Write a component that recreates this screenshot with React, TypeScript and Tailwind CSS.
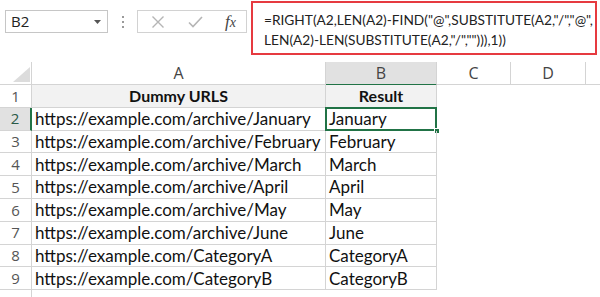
import React from "react";

const rows: [string, string][] = [
  ["https://example.com/archive/January", "January"],
  ["https://example.com/archive/February", "February"],
  ["https://example.com/archive/March", "March"],
  ["https://example.com/archive/April", "April"],
  ["https://example.com/archive/May", "May"],
  ["https://example.com/archive/June", "June"],
  ["https://example.com/CategoryA", "CategoryA"],
  ["https://example.com/CategoryB", "CategoryB"],
];

const cellFont = { fontFamily: "Lato, 'Liberation Sans', sans-serif" };
const uiFont = { fontFamily: "'Open Sans', 'Noto Sans', sans-serif" };

export default function App() {
  return (
    <div className="w-[600px] h-[297px] bg-white overflow-hidden relative" style={uiFont}>
      {/* Top bar */}
      <div className="h-[62px] flex items-start">
        <div className="ml-[5px] mt-[10px] w-[103px] h-[23px] border border-[#c6c6c6] flex items-center justify-between pl-[5px] pr-[6px]">
          <span className="text-[15px] text-[#222] leading-none">B2</span>
          <svg width="7" height="4" viewBox="0 0 7 4"><path d="M0 0h7L3.5 4z" fill="#555" /></svg>
        </div>
        <div className="ml-[14px] mt-[16px] flex flex-col gap-[3px]">
          <div className="w-[2px] h-[2px] bg-[#9a9a9a]" />
          <div className="w-[2px] h-[2px] bg-[#9a9a9a]" />
          <div className="w-[2px] h-[2px] bg-[#9a9a9a]" />
        </div>
        <div className="ml-[13px] mt-[10px] w-[110px] h-[23px] border border-[#d2d2d2] flex items-center">
          <svg className="ml-[13px]" width="14" height="14" viewBox="0 0 14 14">
            <path d="M1.5 1.5l11 11M12.5 1.5l-11 11" stroke="#b5b5b5" strokeWidth="1.4" />
          </svg>
          <svg className="ml-[23px]" width="15" height="12" viewBox="0 0 15 12">
            <path d="M1 6.5l4 4L14 1" stroke="#b5b5b5" strokeWidth="1.6" fill="none" />
          </svg>
          <span className="ml-[22px] text-[17px] italic text-[#444] leading-none" style={{ fontFamily: "'Liberation Serif', serif" }}>
            f<span className="text-[14px]">x</span>
          </span>
        </div>
        <div
          className="ml-[4px] mt-[1px] mr-[3px] flex-1 h-[54px] border-2 border-[#e63a40] pl-[11px] pt-[7px] text-[13.7px] leading-[20px] text-[#222] whitespace-nowrap overflow-hidden"
          style={{ fontFamily: "Lato, 'Open Sans', sans-serif" }}
        >
          <div>=RIGHT(A2,LEN(A2)-FIND("@",SUBSTITUTE(A2,"/","@",</div>
          <div>LEN(A2)-LEN(SUBSTITUTE(A2,"/",""))),1))</div>
        </div>
      </div>

      {/* Column headers */}
      <div className="flex h-[23px] border-b border-[#d4d4d4]">
        <div className="w-[32px] shrink-0 border-r border-[#d4d4d4] relative">
          <svg className="absolute left-[13px] top-[5px]" width="17" height="15" viewBox="0 0 17 15">
            <path d="M17 0V15H0z" fill="#dcdcdc" />
          </svg>
        </div>
        <div className="w-[294px] shrink-0 border-r border-[#d4d4d4] flex items-center justify-center text-[16px] text-[#444]">A</div>
        <div className="w-[111px] shrink-0 border-r border-[#d4d4d4] bg-[#e1e1e1] border-b-2 border-b-[#217346] flex items-center justify-center text-[16px] text-[#444] h-[24px]">B</div>
        <div className="w-[74px] shrink-0 border-r border-[#d4d4d4] flex items-center justify-center text-[16px] text-[#444]">C</div>
        <div className="w-[75px] shrink-0 border-r border-[#d4d4d4] flex items-center justify-center text-[16px] text-[#444]">D</div>
        <div className="flex-1" />
      </div>

      {/* Header row 1 */}
      <div className="flex h-[22.8px]" style={cellFont}>
        <div className="w-[32px] shrink-0 border-r border-b border-[#d4d4d4] flex items-center justify-center text-[15px] text-[#555]" style={uiFont}>1</div>
        <div className="w-[294px] shrink-0 border-r border-b border-[#d4d4d4] bg-[#f2f2f2] flex items-center justify-center text-[16px] font-bold text-[#111]">Dummy URLS</div>
        <div className="w-[111px] shrink-0 border-r border-b border-[#d4d4d4] bg-[#f2f2f2] flex items-center justify-center text-[16px] font-bold text-[#111]">Result</div>
      </div>

      {rows.map(([url, res], i) => {
        const n = i + 2;
        const sel = n === 2;
        return (
          <div key={n} className="flex h-[22.8px]" style={cellFont}>
            <div
              className={
                sel
                  ? "w-[32px] shrink-0 border-r-2 border-r-[#217346] border-b border-[#d4d4d4] bg-[#e1e1e1] flex items-center justify-center text-[15px] text-[#2a5a48]"
                  : "w-[32px] shrink-0 border-r border-b border-[#d4d4d4] flex items-center justify-center text-[15px] text-[#555]"
              }
              style={uiFont}
            >
              {n}
            </div>
            <div className="w-[294px] shrink-0 border-r border-b border-[#d4d4d4] flex items-center pl-[3px] text-[17px] text-[#111] whitespace-nowrap overflow-visible">
              {url}
            </div>
            <div className="w-[111px] shrink-0 border-r border-b border-[#d4d4d4] flex items-center pl-[3px] text-[17px] text-[#111] relative">
              {res}
              {sel && (
                <>
                  <div className="absolute left-[-1px] top-[-1px] right-[-1px] bottom-[-1px] border-2 border-[#217346]" />
                  <div className="absolute right-[-4px] bottom-[-4px] w-[6px] h-[6px] bg-[#217346] border border-white" />
                </>
              )}
            </div>
          </div>
        );
      })}
      <div className="flex h-[10px]">
        <div className="w-[32px] shrink-0 border-r border-[#d4d4d4]" />
      </div>
    </div>
  );
}
